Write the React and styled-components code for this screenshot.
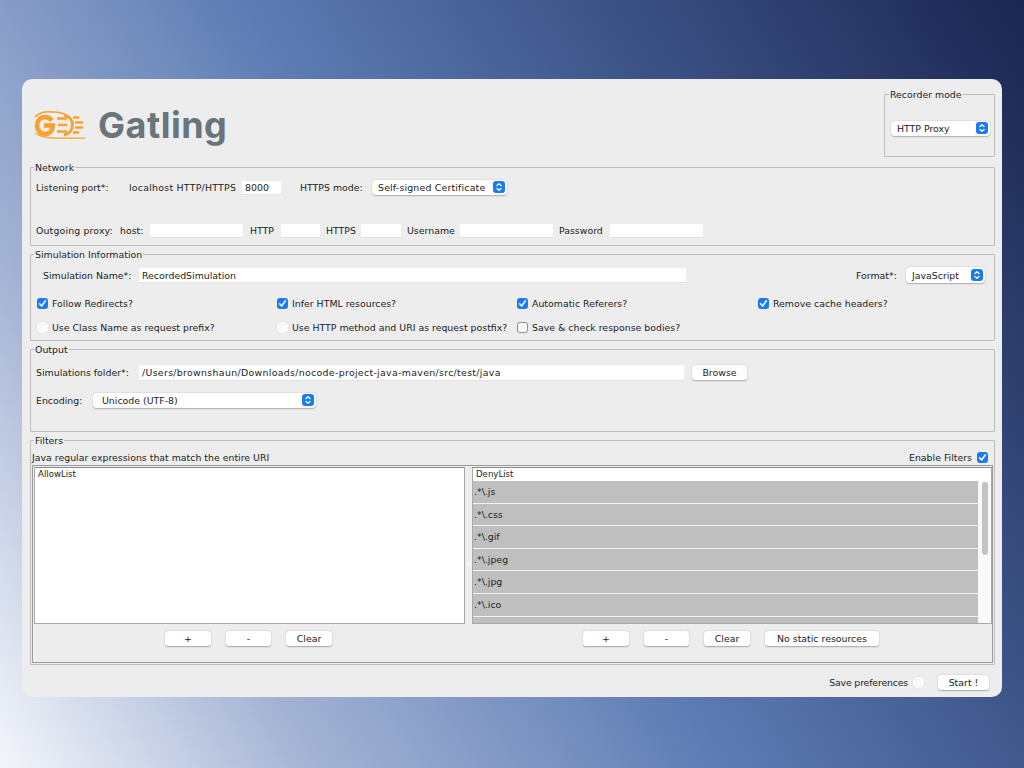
import React from 'react';
import styled, { createGlobalStyle } from 'styled-components';

const Global = createGlobalStyle`
  html, body {
    margin: 0;
    padding: 0;
    height: 100%;
  }
  body {
    font-family: "DejaVu Sans", sans-serif;
    font-size: 9.4px;
    color: #222;
  }
`;

const Desktop = styled.div`
  width: 1024px;
  height: 768px;
  box-sizing: border-box;
  padding: 79px 22px 71px;
  overflow: hidden;
  background: linear-gradient(58deg, #f4f6fb 0%, #a4b3d4 21%, #5d7cb4 48%, #3c5286 72%, #1b2550 100%);
`;

const Window = styled.div`
  height: 618px;
  box-sizing: border-box;
  padding: 0 7px 0 8px;
  background: #ededed;
  border-radius: 10px;
  display: flex;
  flex-direction: column;
`;

const Header = styled.div`
  height: 81px;
  display: flex;
  justify-content: space-between;
  align-items: flex-start;
`;

const Logo = styled.div`
  display: flex;
  align-items: center;
  gap: 12px;
  margin: 26px 0 0 4px;
  height: 40px;
`;

const LogoText = styled.span`
  font-family: "Inter", sans-serif;
  font-weight: 700;
  font-size: 36px;
  letter-spacing: 0.5px;
  color: #68767c;
`;

const Group = styled.fieldset`
  margin: 0 0 1px;
  padding: 0;
  box-sizing: border-box;
  min-width: 0;
  height: ${p => p.$h}px;
  border: 1px solid #bdbdbd;
  border-radius: 1px;
`;

const ModeGroup = styled(Group)`
  width: 111px;
  margin: 8px 0 0;
`;

const Legend = styled.legend`
  margin-left: 3px;
  padding: 2px 1px 0;
  line-height: 12px;
`;

const ModeLegend = styled(Legend)`
  margin-left: 4px;
`;

const Row = styled.div`
  display: flex;
  align-items: center;
  height: 16px;
  margin-top: ${p => p.$top || 0}px;
  padding-left: ${p => p.$left || 0}px;
`;

const Label = styled.span`
  white-space: nowrap;
  width: ${p => (p.$w ? `${p.$w}px` : 'auto')};
  flex: none;
  margin-left: ${p => p.$ml || 0}px;
  letter-spacing: ${p => p.$ls || 0}px;
`;

const Field = styled.div`
  box-sizing: border-box;
  flex: none;
  width: ${p => p.$w}px;
  height: ${p => p.$h || 13}px;
  margin-left: ${p => p.$ml || 0}px;
  padding-left: 3px;
  background: #fff;
  box-shadow: 0 1px 0 #e2e2e2;
  line-height: ${p => (p.$h || 13) + 1}px;
  letter-spacing: ${p => p.$ls || 0}px;
  white-space: nowrap;
  overflow: hidden;
`;

const SelectBox = styled.div`
  box-sizing: border-box;
  flex: none;
  width: ${p => p.$w}px;
  height: ${p => p.$h || 15}px;
  margin-left: ${p => p.$ml || 0}px;
  padding: 0 2px 0 ${p => p.$pad || 6}px;
  display: flex;
  align-items: center;
  justify-content: space-between;
  background: #fff;
  border-radius: 4px;
  box-shadow: 0 0.5px 1.5px rgba(0, 0, 0, 0.28);
  letter-spacing: ${p => p.$ls || 0}px;
  white-space: nowrap;
`;

const Stepper = styled.span`
  width: 12px;
  height: 12px;
  border-radius: 3px;
  background: #1a7bf5;
  display: flex;
  align-items: center;
  justify-content: center;
`;

const Button = styled.div`
  box-sizing: border-box;
  flex: none;
  width: ${p => p.$w}px;
  height: 15px;
  margin-left: ${p => p.$ml || 0}px;
  display: flex;
  align-items: center;
  justify-content: center;
  background: #fff;
  border-radius: 3px;
  box-shadow: 0 0.5px 1.5px rgba(0, 0, 0, 0.3);
`;

const Checks = styled.div`
  display: grid;
  grid-template-columns: 240px 240px 241px 1fr;
  grid-auto-rows: 24px;
  margin: 8px 0 0 6px;
  align-items: center;
`;

const CheckItem = styled.div`
  display: flex;
  align-items: center;
  gap: ${p => p.$gap || 4}px;
  white-space: nowrap;
`;

const Box = styled.span`
  box-sizing: border-box;
  flex: none;
  width: 11px;
  height: 11px;
  margin-left: ${p => p.$ml || 0}px;
  border-radius: 3px;
  display: flex;
  align-items: center;
  justify-content: center;
  background: ${p => (p.$on ? '#1a7bf5' : '#f9f9f9')};
  border: ${p => (p.$ring ? '1px solid #8a93a3' : 'none')};
  box-shadow: ${p => (p.$on ? 'none' : '0 0 1px rgba(0, 0, 0, 0.2)')};
`;

const FilterHead = styled.div`
  display: flex;
  justify-content: space-between;
  align-items: center;
  height: 14px;
  margin: 3px 6px 0 1px;
`;

const Inner = styled.div`
  box-sizing: border-box;
  height: 198px;
  margin: 1px 1px 0;
  border: 1px solid #9a9a9a;
`;

const Split = styled.div`
  display: flex;
  height: 157px;
  margin: 1px 0 0 1px;
`;

const Pane = styled.div`
  box-sizing: border-box;
  flex: none;
  width: ${p => p.$w}px;
  height: 100%;
  background: #fff;
  border: 1px solid #a8a8a8;
  border-top-color: #8a8a8a;
  overflow: hidden;
  display: flex;
  flex-direction: column;
`;

const PaneTitle = styled.div`
  flex: none;
  height: 13px;
  line-height: 13px;
  padding-left: 3px;
  font-size: 8.6px;
  background: #fff;
`;

const Divider = styled.div`
  flex: 1;
  display: flex;
  align-items: center;
  justify-content: center;
  padding-top: 36px;

  &::after {
    content: '';
    width: 4px;
    height: 4px;
    border-radius: 50%;
    background: #f7f7f7;
  }
`;

const TableBody = styled.div`
  flex: 1;
  display: flex;
  min-height: 0;
`;

const List = styled.div`
  width: 505px;
  display: flex;
  flex-direction: column;
  gap: 1px;
  overflow: hidden;
  background: #f2f2f2;
`;

const ListRow = styled.div`
  flex: none;
  box-sizing: border-box;
  height: 21.6px;
  line-height: 21px;
  padding-left: 1px;
  background: #bfbfbf;
`;

const Track = styled.div`
  flex: 1;
  padding: 0 3px 0 4px;
  background: #f9f9f9;
`;

const Thumb = styled.div`
  height: 73px;
  margin-top: 1px;
  border-radius: 3px;
  background: #c3c3c3;
`;

const ButtonRow = styled.div`
  display: flex;
  align-items: center;
  height: 15px;
  margin-top: 7px;
`;

const Footer = styled.div`
  display: flex;
  justify-content: flex-end;
  align-items: center;
  height: 15px;
  margin-top: 9px;
  padding-right: 6px;
`;

function Arrows() {
  return (
    <svg width="8" height="10" viewBox="0 0 8 10" fill="none" stroke="#fff" strokeWidth="1.3" strokeLinecap="round" strokeLinejoin="round">
      <path d="M2 3.6 4 1.8 6 3.6" />
      <path d="M2 6.4 4 8.2 6 6.4" />
    </svg>
  );
}

function Tick() {
  return (
    <svg width="9" height="9" viewBox="0 0 9 9" fill="none" stroke="#fff" strokeWidth="1.6" strokeLinecap="round" strokeLinejoin="round">
      <path d="M1.6 4.8 3.6 7 7.4 1.8" />
    </svg>
  );
}

function Select({ children, ...rest }) {
  return (
    <SelectBox {...rest}>
      <span>{children}</span>
      <Stepper><Arrows /></Stepper>
    </SelectBox>
  );
}

function Check({ on, ring, children }) {
  return (
    <CheckItem>
      <Box $on={on} $ring={ring}>{on && <Tick />}</Box>
      <span>{children}</span>
    </CheckItem>
  );
}

function GatlingMark() {
  return (
    <svg width="52" height="30" viewBox="0 0 52 30" fill="none" stroke="#f7a22e">
      <path d="M1 7C5 3 10 1.8 15 1.8 20 1.8 26 2.4 31 4" strokeWidth="1.6" />
      <path d="M1 23C6 26.5 14 28.2 22 28.2H51" strokeWidth="1.2" />
      <path d="M17.8 10.5C16 8 13.5 7 11 7 6.5 7 3 10.8 3 15.5S6.5 24 11 24C15.5 24 18.8 20.5 18.8 15.5H10" strokeWidth="4.6" />
      <path d="M23 8.5H33M24 15H33M23 21.5H33" strokeWidth="2.6" />
      <path d="M30 5C35 6 38.5 10 38.5 15S35 24 30 25" strokeWidth="3" />
      <path d="M39 7.5H45M41 12.5H49M41 17.5H49M39 22.5H45" strokeWidth="2.4" />
    </svg>
  );
}

const denyRows = ['.*\\.js', '.*\\.css', '.*\\.gif', '.*\\.jpeg', '.*\\.jpg', '.*\\.ico', ''];

export default function App() {
  return (
    <Desktop>
      <Global />
      <Window>
        <Header>
          <Logo>
            <GatlingMark />
            <LogoText>Gatling</LogoText>
          </Logo>
          <ModeGroup $h={70}>
            <ModeLegend>Recorder mode</ModeLegend>
            <Row $top={19} $left={6}>
              <Select $w={99}>HTTP Proxy</Select>
            </Row>
          </ModeGroup>
        </Header>

        <Group $h={86}>
          <Legend>Network</Legend>
          <Row $top={5} $left={5}>
            <Label $w={93}>Listening port*:</Label>
            <Label $w={113} $ls={0.25}>localhost HTTP/HTTPS</Label>
            <Field $w={39}>8000</Field>
            <Label $ml={19} $w={72}>HTTPS mode:</Label>
            <Select $w={135} $ls={0.18}>Self-signed Certificate</Select>
          </Row>
          <Row $top={27} $left={5}>
            <Label $w={84} $ls={0.14}>Outgoing proxy:</Label>
            <Label $w={30}>host:</Label>
            <Field $w={93} />
            <Label $ml={7} $w={31}>HTTP</Label>
            <Field $w={39} />
            <Label $ml={6} $w={35}>HTTPS</Label>
            <Field $w={40} />
            <Label $ml={6} $w={53}>Username</Label>
            <Field $w={93} />
            <Label $ml={6} $w={51}>Password</Label>
            <Field $w={93} />
          </Row>
        </Group>

        <Group $h={94}>
          <Legend>Simulation Information</Legend>
          <Row $top={6} $left={12}>
            <Label $w={96}>Simulation Name*:</Label>
            <Field $w={547} $h={14}>RecordedSimulation</Field>
            <Label $ml={170} $w={50}>Format*:</Label>
            <Select $w={79} $h={16}>JavaScript</Select>
          </Row>
          <Checks>
            <Check on>Follow Redirects?</Check>
            <Check on>Infer HTML resources?</Check>
            <Check on>Automatic Referers?</Check>
            <Check on>Remove cache headers?</Check>
            <Check>Use Class Name as request prefix?</Check>
            <Check>Use HTTP method and URI as request postfix?</Check>
            <Check ring>Save &amp; check response bodies?</Check>
          </Checks>
        </Group>

        <Group $h={90}>
          <Legend>Output</Legend>
          <Row $top={8} $left={5}>
            <Label $w={103}>Simulations folder*:</Label>
            <Field $w={545} $h={15} $ls={0.32}>/Users/brownshaun/Downloads/nocode-project-java-maven/src/test/java</Field>
            <Button $w={55} $ml={8}>Browse</Button>
          </Row>
          <Row $top={12} $left={5}>
            <Label $w={57}>Encoding:</Label>
            <Select $w={223} $pad={9}>Unicode (UTF-8)</Select>
          </Row>
        </Group>

        <Group $h={232}>
          <Legend>Filters</Legend>
          <FilterHead>
            <span>Java regular expressions that match the entire URI</span>
            <CheckItem $gap={5}>
              <span>Enable Filters</span>
              <Box $on><Tick /></Box>
            </CheckItem>
          </FilterHead>
          <Inner>
            <Split>
              <Pane $w={431}>
                <PaneTitle>AllowList</PaneTitle>
              </Pane>
              <Divider />
              <Pane $w={520}>
                <PaneTitle>DenyList</PaneTitle>
                <TableBody>
                  <List>
                    {denyRows.map((r, i) => <ListRow key={i}>{r}</ListRow>)}
                  </List>
                  <Track><Thumb /></Track>
                </TableBody>
              </Pane>
            </Split>
            <ButtonRow>
              <Button $w={46} $ml={132}>+</Button>
              <Button $w={45} $ml={15}>-</Button>
              <Button $w={46} $ml={15}>Clear</Button>
              <Button $w={46} $ml={251}>+</Button>
              <Button $w={45} $ml={15}>-</Button>
              <Button $w={46} $ml={15}>Clear</Button>
              <Button $w={114} $ml={15}>No static resources</Button>
            </ButtonRow>
          </Inner>
        </Group>

        <Footer>
          <Label $ls={-0.18}>Save preferences</Label>
          <Box $ml={5} />
          <Button $w={51} $ml={14}>Start !</Button>
        </Footer>
      </Window>
    </Desktop>
  );
}
